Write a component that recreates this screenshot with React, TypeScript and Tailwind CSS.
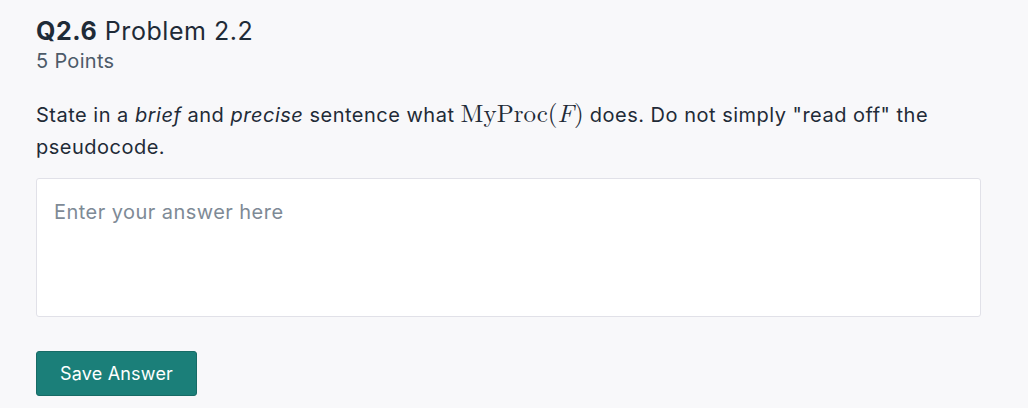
import React from 'react';

const font = { fontFamily: 'Inter, "Open Sans", sans-serif' };
const mathFont = { fontFamily: '"Latin Modern Roman", "Liberation Serif", "DejaVu Serif", serif' };

export default function App() {
  return (
    <div
      className="min-h-[408px] w-full bg-[#f8f8fa] px-[36px] pt-[14px] text-[#1f2b37]"
      style={font}
    >
      <h2 className="text-[25px] leading-[34px] tracking-[0.55px]">
        <span className="font-bold">Q2.6</span> Problem 2.2
      </h2>
      <div className="text-[20px] leading-[26px] tracking-[0.3px] text-[#4d5b69]">5 Points</div>

      <p className="mt-[22px] w-[945px] text-[20px] leading-[32px] tracking-[0.5px]">
        State in a <em>brief</em> and <em>precise</em> sentence what{' '}
        <span className="text-[25px] tracking-normal" style={mathFont}>
          MyProc(<i>F</i>)
        </span>{' '}
        does. Do not simply "read off" the pseudocode.
      </p>

      <div className="mt-[15px] mr-[11px] h-[139px] rounded-[3px] border border-[#e1e1e8] bg-white px-[17px] pt-[19px]">
        <textarea
          placeholder="Enter your answer here"
          className="h-full w-full resize-none bg-transparent text-[20px] leading-[28px] tracking-[0.45px] text-[#1f2b37] outline-none placeholder:text-[#7e8a96]"
          style={font}
        />
      </div>

      <button className="mt-[34px] h-[45px] w-[161px] rounded-[3px] border border-[#176b66] bg-[#1b7f79] text-[18px] tracking-[0.2px] text-white">
        Save Answer
      </button>
    </div>
  );
}
